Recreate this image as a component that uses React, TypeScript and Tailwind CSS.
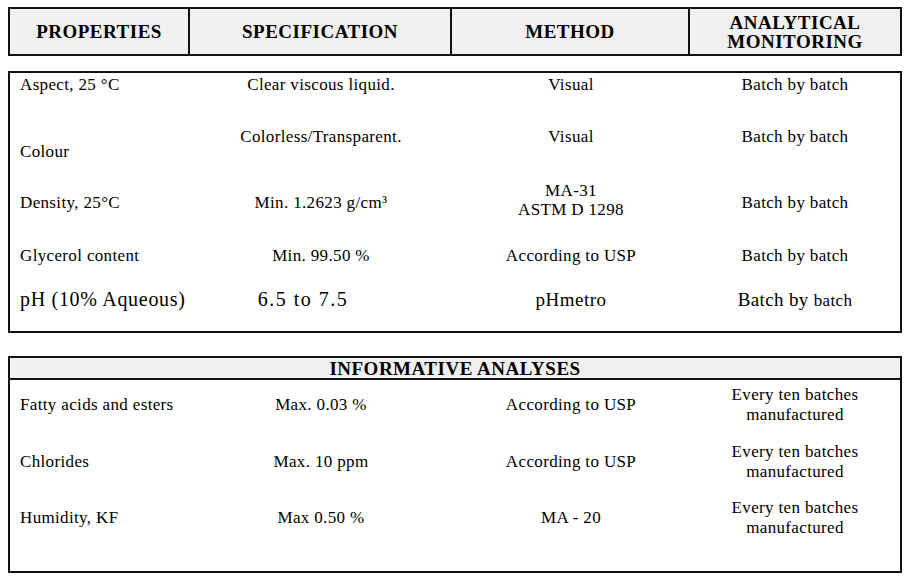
import type { ReactNode } from "react";

const serif = "[font-family:'Liberation_Serif','Times_New_Roman',serif]";
const cols = "grid grid-cols-[180px_262px_238px_1fr]";
const body = "text-[17px] leading-[20px] tracking-[0.35px]";

type Row = {
  h: string;
  prop: ReactNode;
  spec: ReactNode;
  method: ReactNode;
  monitor: ReactNode;
  propClass?: string;
  specClass?: string;
  methodClass?: string;
};

const mainRows: Row[] = [
  {
    h: "h-[24px]",
    prop: "Aspect, 25 °C",
    spec: "Clear viscous liquid.",
    method: "Visual",
    monitor: "Batch by batch",
  },
  {
    h: "h-[80px]",
    prop: "Colour",
    propClass: "pt-[30px]",
    spec: "Colorless/Transparent.",
    method: "Visual",
    monitor: "Batch by batch",
  },
  {
    h: "h-[52px]",
    prop: "Density, 25°C",
    spec: "Min. 1.2623 g/cm³",
    method: (
      <>
        MA-31
        <br />
        ASTM D 1298
      </>
    ),
    methodClass: "mb-[7px] leading-[19px]",
    monitor: "Batch by batch",
  },
  {
    h: "h-[54px]",
    prop: "Glycerol content",
    spec: "Min. 99.50 %",
    method: "According to USP",
    monitor: "Batch by batch",
  },
  {
    h: "h-[34px]",
    prop: <span className="text-[20px] tracking-[0.7px]">pH (10% Aqueous)</span>,
    spec: <span className="text-[20px] tracking-[1.5px]">6.5 to 7.5</span>,
    specClass: "pr-[36px]",
    method: <span className="text-[19px] tracking-[0.5px]">pHmetro</span>,
    monitor: (
      <span className="text-[19px] tracking-[0.35px]">
        Batch by <span className="text-[17px]">batch</span>
      </span>
    ),
  },
];

const every = (
  <>
    Every ten batches
    <br />
    manufactured
  </>
);

const infoRows: Row[] = [
  {
    h: "h-[50px]",
    prop: "Fatty acids and esters",
    spec: "Max. 0.03 %",
    method: "According to USP",
    monitor: every,
  },
  {
    h: "h-[64px]",
    prop: "Chlorides",
    spec: "Max. 10 ppm",
    method: "According to USP",
    monitor: every,
  },
  {
    h: "h-[48px]",
    prop: "Humidity, KF",
    spec: "Max 0.50 %",
    method: "MA - 20",
    monitor: every,
  },
];

function BodyRow({ row }: { row: Row }) {
  return (
    <div className={`${cols} ${row.h} items-center ${body}`}>
      <div className={`pl-[10px] ${row.propClass ?? ""}`}>{row.prop}</div>
      <div className={`text-center ${row.specClass ?? ""}`}>{row.spec}</div>
      <div className={`text-center ${row.methodClass ?? ""}`}>{row.method}</div>
      <div className="text-center">{row.monitor}</div>
    </div>
  );
}

export default function App() {
  const head = "flex items-center justify-center text-center font-bold text-[19px] leading-[19px] tracking-[0.5px]";

  return (
    <div className={`min-h-screen bg-white text-black pl-[8px] pr-[8px] pt-[7px] ${serif}`}>
      <div className={`${cols} h-[49px] border-2 border-[#111] bg-[#f0f0f0]`}>
        <div className={`${head} border-r-2 border-[#111]`}>PROPERTIES</div>
        <div className={`${head} border-r-2 border-[#111]`}>SPECIFICATION</div>
        <div className={`${head} border-r-2 border-[#111]`}>METHOD</div>
        <div className={`${head} pt-[1px]`}>
          ANALYTICAL
          <br />
          MONITORING
        </div>
      </div>

      <div className="mt-[15px] h-[262px] border-2 border-[#111]">
        {mainRows.map((r, i) => (
          <BodyRow key={i} row={r} />
        ))}
      </div>

      <div className="mt-[23px] h-[217px] border-2 border-[#111]">
        <div className="h-[22px] border-b-2 border-[#111] bg-[#f0f0f0] flex items-center justify-center font-bold text-[19px] leading-[19px] tracking-[0.5px]">
          INFORMATIVE ANALYSES
        </div>
        {infoRows.map((r, i) => (
          <BodyRow key={i} row={r} />
        ))}
      </div>
    </div>
  );
}
